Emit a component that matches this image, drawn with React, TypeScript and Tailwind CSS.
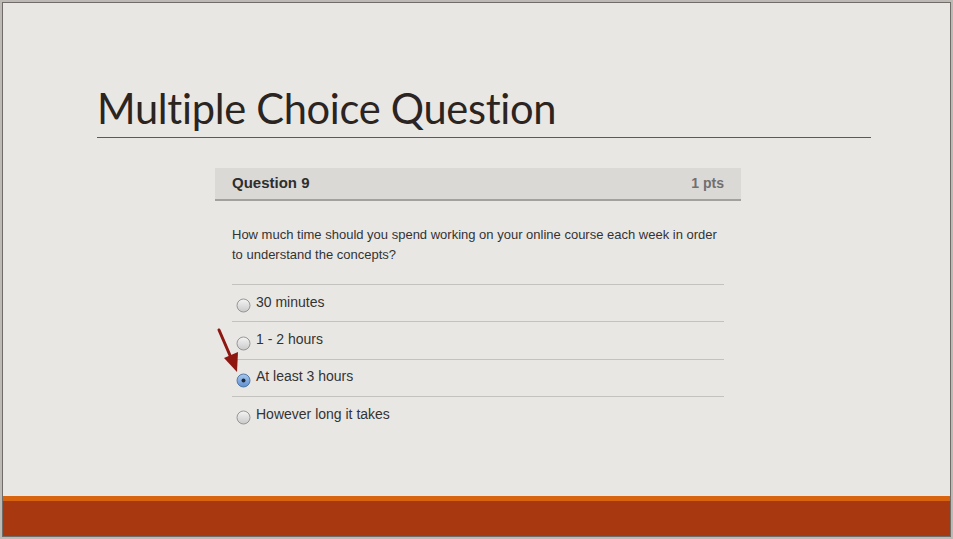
import React from "react";

function Radio({ checked }: { checked?: boolean }) {
  return (
    <svg width="15" height="15" viewBox="0 0 15 15" className="shrink-0">
      <defs>
        <linearGradient id={checked ? "rg1" : "rg0"} x1="0" y1="0" x2="0" y2="1">
          {checked ? (
            <>
              <stop offset="0" stopColor="#a9c8ee" />
              <stop offset="1" stopColor="#5d8fd0" />
            </>
          ) : (
            <>
              <stop offset="0" stopColor="#f4f4f4" />
              <stop offset="1" stopColor="#c9c9c9" />
            </>
          )}
        </linearGradient>
      </defs>
      <circle cx="7.5" cy="7.5" r="6.5" fill={`url(#${checked ? "rg1" : "rg0"})`} stroke={checked ? "#4a6f9e" : "#8d8d8d"} strokeWidth="0.9" />
      {checked && <circle cx="7.5" cy="7.5" r="2" fill="#1d2b3d" />}
    </svg>
  );
}

function Option({ label, checked }: { label: string; checked?: boolean }) {
  return (
    <div className="flex items-center h-[37.4px] border-t border-[#c4c2bf] pl-[4px] gap-[5px]">
      <div className="pt-[5px]">
        <Radio checked={checked} />
      </div>
      <span className="text-[14px] text-[#333] leading-none pb-[3px]">{label}</span>
    </div>
  );
}

export default function App() {
  return (
    <div className="w-[953px] h-[539px] bg-[#bdbab6] p-[2px]" style={{ fontFamily: '"Liberation Sans", Arial, sans-serif' }}>
      <div className="w-full h-full border border-[#6f6c69] bg-[#e9e7e4] flex flex-col">
        <div className="flex-1 flex flex-col">
          <div className="pl-[94px] pt-[81px] pr-[79px]">
            <div
              className="text-[41.6px] leading-[48px] text-[#2b2420] tracking-[-0.3px]"
              style={{ fontFamily: "Lato, 'Open Sans', sans-serif" }}
            >
              Multiple Choice Question
            </div>
            <div className="mt-[5px] h-px bg-[#5c5a58]" />
          </div>
          <div className="ml-[212px] mt-[30px] w-[526px]">
            <div className="h-[33px] bg-[#dbd9d6] border-b-2 border-[#a3a19e] flex items-center justify-between px-[17px]">
              <span className="text-[15px] font-bold text-[#2e2e2e]">Question 9</span>
              <span className="text-[14px] font-bold text-[#707070]">1 pts</span>
            </div>
            <div className="px-[17px] pt-[24px]">
              <p className="text-[13px] leading-[20px] text-[#333]">
                How much time should you spend working on your online course each week in order
                <br />
                to understand the concepts?
              </p>
              <div className="mt-[19px] relative">
                <Option label="30 minutes" />
                <Option label="1 - 2 hours" />
                <Option label="At least 3 hours" checked />
                <Option label="However long it takes" />
                <svg className="absolute left-[-16px] top-[44px]" width="26" height="46" viewBox="0 0 26 46">
                  <line x1="3" y1="2" x2="16" y2="32" stroke="#8e1712" strokeWidth="3" strokeLinecap="round" />
                  <polygon points="8,30 22,24 21,44" fill="#8e1712" />
                </svg>
              </div>
            </div>
          </div>
        </div>
        <div className="h-[5px] bg-[#d8640f]" />
        <div className="h-[35px] bg-[#a8380f]" />
      </div>
    </div>
  );
}
